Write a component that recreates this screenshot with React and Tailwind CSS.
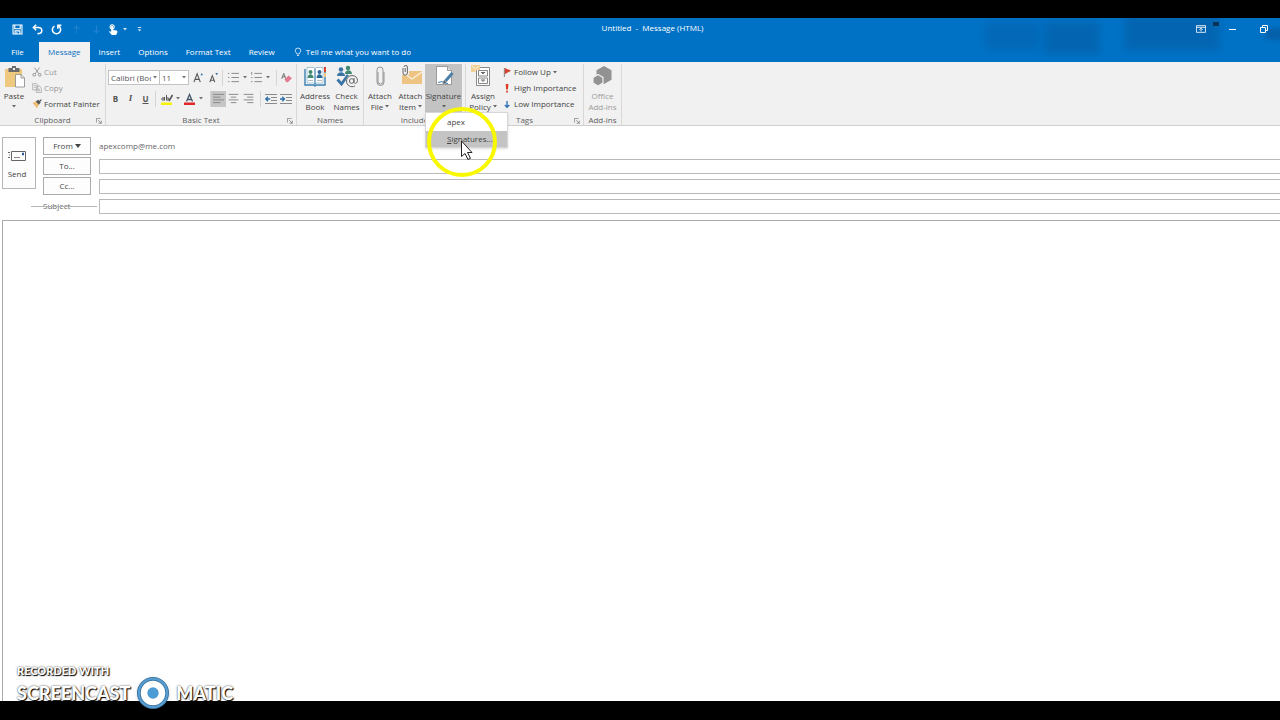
import React, { useState } from 'react';

const tabs = ['File', 'Message', 'Insert', 'Options', 'Format Text', 'Review'];

const Caret = ({ className = '' }) => (
  <svg viewBox="0 0 4 3" className={`inline-block w-1 h-[3px] shrink-0 opacity-80 ${className}`} aria-hidden="true">
    <path d="M0 0h4L2 2.500z" fill="currentColor" />
  </svg>
);

const Icon = ({ box = 16, className = 'w-3 h-3', children }) => (
  <svg viewBox={`0 0 ${box} ${box}`} className={`shrink-0 ${className}`} fill="none" stroke="currentColor" aria-hidden="true">
    {children}
  </svg>
);

/* ---------- large ribbon icons, 24 x 24 ---------- */

const PasteIcon = () => (
  <Icon box={24} className="w-6 h-6">
    <path d="M3 4h17v18H3z" fill="#edc87e" stroke="none" />
    <path d="M6.500 3H10V1h4v2h3.500v4h-11z" fill="#6b6b6b" stroke="none" />
    <path d="M11 3h2v2h-2z" fill="#f1f1f1" stroke="none" />
    <path d="M13.500 9.500h5.500l3.500 3.500v9h-9z" fill="#fff" stroke="#888" strokeWidth=".8" />
    <path d="M19 9.500v3.500h3.500" stroke="#888" strokeWidth=".8" />
  </Icon>
);

const AddressBookIcon = () => (
  <Icon box={24} className="w-6 h-6">
    <path d="M2 4v16h9l1 1 1-1h9V4" fill="#fff" stroke="#3b7fb0" strokeWidth="1.400" />
    <path d="M4 2.500h7l1 1 1-1h7v15.500h-7l-1 1-1-1H4z" fill="#fff" stroke="#8fb2cb" strokeWidth=".8" />
    <path d="M12 3.500v16" stroke="#3b7fb0" strokeWidth="1.200" />
    <path d="M21 2h2v5h-2z" fill="#d9432f" stroke="none" />
    <path d="M21 8h2v4h-2z" fill="#edc87e" stroke="none" />
    <circle cx="7.500" cy="7" r="2" fill="#3f8a70" stroke="none" />
    <path d="M4.500 13c0-5 6-5 6 0z" fill="#3f8a70" stroke="none" />
    <circle cx="16.500" cy="7" r="2" fill="#2b6b99" stroke="none" />
    <path d="M13.500 13c0-5 6-5 6 0z" fill="#2b6b99" stroke="none" />
    <path d="M5 15.500h5M14 15.500h5" stroke="#bbb" />
  </Icon>
);

const CheckNamesIcon = () => (
  <Icon box={24} className="w-6 h-6">
    <circle cx="6" cy="4.500" r="2.300" fill="#3b75a5" stroke="none" />
    <path d="M2 11c0-5 8-5 8 0z" fill="#3b75a5" stroke="none" />
    <circle cx="13" cy="3" r="2.200" fill="#3f8a70" stroke="none" />
    <path d="M10 9c0-5 7-5 7 0z" fill="#3f8a70" stroke="none" />
    <path d="M2.500 14.500l4 4.500 6.500-9" stroke="#3b75a5" strokeWidth="2.800" />
    <circle cx="17" cy="16" r="6" fill="#f1f1f1" stroke="none" />
    <path d="M20 21c-4 2-8.500-.5-8.500-5 0-3 2.500-5.500 5.500-5.500s5.500 2 5.500 5-3.500 4-3.500 1.500v-4" stroke="#666" />
    <circle cx="16.700" cy="16" r="2.300" stroke="#666" />
  </Icon>
);

const ClipIcon = () => (
  <Icon box={24} className="w-6 h-6">
    <path d="M10 7v9.500a2.500 2.500 0 0 0 5 0V5a3 3 0 0 0-6 0v12a3.500 3.500 0 0 0 7 0V7" stroke="#8a8a8a" strokeWidth=".9" />
  </Icon>
);

const AttachItemIcon = () => (
  <Icon box={24} className="w-6 h-6">
    <path d="M3 6h20v13H3z" fill="#edc483" stroke="none" />
    <path d="M3 7l10 7 10-7" stroke="#fbf1dd" strokeWidth="1.300" />
    <path d="M3 0h7v10H3z" fill="#f1f1f1" stroke="none" />
    <path d="M4 3v5a2.200 2.200 0 0 0 4.400 0V2a1.600 1.600 0 0 0-3.200 0M6.200 3v4" stroke="#666" />
  </Icon>
);

const SignatureIcon = () => (
  <Icon box={24} className="w-6 h-6">
    <path d="M4.500 1.500h11l4 4v14h-15z" fill="#fff" stroke="#888" strokeWidth=".8" />
    <path d="M15.500 1.500v4h4" fill="#e4e4e4" stroke="#888" strokeWidth=".8" />
    <path d="M20.500 8L13.500 16" stroke="#4c7fa8" strokeWidth="3" />
    <path d="M12 15l2.500 2.500-4 1.500z" fill="#555" stroke="none" />
    <path d="M6 17.500l4-1 2 1.500 4 .5" stroke="#4c7fa8" />
  </Icon>
);

const PolicyIcon = () => (
  <Icon box={24} className="w-6 h-6">
    <path d="M5.500 2.500h13v18h-13z" fill="#fff" stroke="#888" />
    <path d="M7.500 5.500h9v5.500h-9zM7.500 13h9v5.500h-9z" fill="#fafafa" stroke="#888" />
    <path d="M10 7.500h4M10 15h4" stroke="#666" />
    <path d="M11 8h2v1h-2zM11 15.500h2v1h-2z" fill="#777" stroke="none" />
    <path d="M0 0h9v5H6L4 7H0z" fill="#f2cf96" stroke="none" />
    <path d="M1 1l3.500 3L8 1" stroke="#fff" strokeWidth=".8" />
  </Icon>
);

const AddinsIcon = () => (
  <Icon box={24} className="w-6 h-6">
    <path d="M13 1l7.500 4.300v9.400L13 19l-7.500-4.300V5.300z" fill="#929292" stroke="none" />
    <path d="M7 9.500l5 2.900v5.700L7 21l-5-2.900v-5.700z" fill="#929292" stroke="#f1f1f1" strokeWidth="1.200" />
  </Icon>
);

/* ---------- small building blocks ---------- */

const Sep = ({ className = '' }) => <span className={`w-px h-4 bg-[#d5d5d5] ${className}`} />;

const ToolButton = ({ label, active, children }) => (
  <button
    type="button"
    aria-label={label}
    className={`w-[15px] h-4 flex items-center justify-center shrink-0 ${active ? 'bg-[#c6c6c6]' : ''}`}
  >
    {children}
  </button>
);

const DropButton = ({ label }) => (
  <button type="button" aria-label={label} className="w-2 h-4 flex items-center justify-center shrink-0">
    <Caret />
  </button>
);

const Lines = ({ d }) => (
  <Icon className="w-[11px] h-[11px]">
    <path d={d} stroke="#888" strokeWidth="1.400" />
  </Icon>
);

const BigButton = ({ icon, lines, caret, className = '', ...rest }) => (
  <button type="button" className={`h-12 flex flex-col items-center pt-px leading-[11px] whitespace-nowrap ${className}`} {...rest}>
    {icon}
    <span className="mt-px">{lines[0]}</span>
    <span className="flex items-center gap-[2px] h-[11px]">
      {lines[1]}
      {caret && <Caret />}
    </span>
  </button>
);

const Group = ({ label, launcher, className = '', children }) => (
  <section className={`shrink-0 flex flex-col border-r border-[#d8d8d8] ${className}`} aria-label={label}>
    <div className="h-[50px] flex">{children}</div>
    <div className="relative h-[11px] text-center leading-[11px] text-[#5e5e5e]">
      {label}
      {launcher && (
        <button type="button" aria-label={`${label} settings`} className="absolute right-[3px] top-1">
          <Icon box={8} className="w-[6px] h-[6px]">
            <path d="M.5 6V.5H6M3 3l4 4M7 3.500V7H3.500" stroke="#777" />
          </Icon>
        </button>
      )}
    </div>
  </section>
);

/* ---------- window parts ---------- */

const TitleBar = () => (
  <div className="relative h-6 pb-[2px] flex items-center text-white">
    <div className="absolute top-0 -bottom-4 right-0 w-[300px] overflow-hidden" aria-hidden="true">
      <div className="absolute left-1 top-1 w-14 h-7 bg-[#0560a9] opacity-50 blur-[4px]" />
      <div className="absolute left-16 top-1 w-14 h-8 bg-[#0560a9] opacity-70 blur-[4px]" />
      <div className="absolute left-36 -top-1 w-24 h-9 bg-[#0560a9] opacity-70 blur-[4px]" />
      <div className="absolute right-[-6px] top-[10px] w-5 h-3 bg-[#0560a9] blur-[2px]" />
      <div className="absolute right-[61px] top-1 w-[6px] h-1 bg-[#0b3358]" />
    </div>

    <div className="relative flex items-center pl-[11px]">
      <button type="button" aria-label="Save" className="w-3 flex justify-center">
        <Icon className="w-[11px] h-[11px]"><path d="M1.500 1.500h13v13h-13zM4 2v5h8V2M4.500 14v-4h7v4M7 12v2" strokeWidth="1.600" /></Icon>
      </button>
      <button type="button" aria-label="Undo" className="w-3 ml-2 flex justify-center">
        <Icon className="w-[11px] h-[11px]"><path d="M6 1L2 5l4 4M2 5h7c7 0 7 9 0 9H8" strokeWidth="2.200" /></Icon>
      </button>
      <button type="button" aria-label="Redo" className="w-3 ml-[7px] flex justify-center">
        <Icon className="w-[11px] h-[11px]"><path d="M11 3a6 6 0 1 1-6 0M10 7V2h5" strokeWidth="2.200" /></Icon>
      </button>
      <button type="button" aria-label="Previous item" className="w-3 ml-2 flex justify-center text-[#1f80d0]">
        <Icon className="w-[9px] h-[9px]"><path d="M8 15V2M3 7l5-5 5 5" strokeWidth="2" /></Icon>
      </button>
      <button type="button" aria-label="Next item" className="w-3 ml-2 flex justify-center text-[#1f80d0]">
        <Icon className="w-[9px] h-[9px]"><path d="M8 1v13M3 9l5 5 5-5" strokeWidth="2" /></Icon>
      </button>
      <button type="button" aria-label="Touch mode" className="w-6 ml-[3px] flex items-center justify-center gap-1">
        <Icon className="w-[11px] h-[11px]">
          <circle cx="6" cy="4" r="3" strokeWidth="1.500" />
          <path d="M5 3h2v6l6 1v3l-2 3H6l-4-5 3 1z" fill="currentColor" />
        </Icon>
        <Caret />
      </button>
      <button type="button" aria-label="Customize toolbar" className="w-3 ml-1 flex justify-center">
        <Icon box={6} className="w-[5px] h-[5px]"><path d="M1 .5h4" /><path d="M1 3h4L3 5z" fill="currentColor" stroke="none" /></Icon>
      </button>
    </div>

    <h1 className="absolute left-[47%] right-0 top-1 leading-3 whitespace-pre">Untitled  -  Message (HTML)</h1>

    <div className="relative ml-auto flex items-center gap-5 pr-3">
      <button type="button" aria-label="Ribbon display options" className="mr-[3px]">
        <Icon box={12} className="w-[10px] h-[10px]"><path d="M.5 2h11v8H.5zM.5 4h11M6 9V5.500M4 7l2-2 2 2" /></Icon>
      </button>
      <button type="button" aria-label="Minimize"><Icon box={8} className="w-2 h-2"><path d="M0 4.500h7" /></Icon></button>
      <button type="button" aria-label="Restore" className="ml-[3px]">
        <Icon box={8} className="w-2 h-2"><path d="M.5 2.500h5v5h-5zM2.500 2V.5h5v5H6" /></Icon>
      </button>
    </div>
  </div>
);

const TabBar = ({ active, onSelect }) => (
  <nav className="relative h-5 flex text-white" aria-label="Ribbon tabs">
    {tabs.map((tab) => (
      <button
        key={tab}
        type="button"
        onClick={() => onSelect(tab)}
        className={`whitespace-nowrap ${tab === 'File' ? 'w-[39px] pr-1' : 'px-[9px]'} ${
          active === tab ? 'bg-[#f1f1f1] text-[#0a6fc2]' : ''
        }`}
      >
        {tab}
      </button>
    ))}
    <button type="button" className="flex items-center gap-1 ml-[10px] whitespace-nowrap">
      <Icon className="w-2 h-[10px]"><path d="M5.500 12c0-3-3-3-3-6.500a5.500 5.500 0 0 1 11 0c0 3.500-3 3.500-3 6.500zM6 15h4" strokeWidth="1.500" /></Icon>
      Tell me what you want to do
    </button>
  </nav>
);

const BasicText = () => (
  <div className="pl-[2px] pt-[6px] flex flex-col gap-[6px] text-[#555]">
    <div className="flex items-center h-[15px]">
      <label className="relative w-[52px] h-[15px]">
        <select aria-label="Font" className="appearance-none w-full h-full block bg-white border border-[#c3c3c3] pl-[2px] pr-2 leading-[13px]">
          <option>Calibri (Body)</option>
        </select>
        <Caret className="absolute right-[3px] top-[6px]" />
      </label>
      <label className="relative w-[29px] h-[15px]">
        <select aria-label="Font size" defaultValue="11" className="appearance-none w-full h-full block bg-white border border-l-0 border-[#c3c3c3] pl-[2px] pr-2 leading-[13px]">
          <option>10</option>
          <option>11</option>
          <option>12</option>
        </select>
        <Caret className="absolute right-[3px] top-[6px]" />
      </label>
      <span className="w-[2px]" />
      <ToolButton label="Grow font">
        <Icon box={12} className="w-[11px] h-[11px]"><path d="M1 11L4.500 2 8 11M2.300 8h4.500" stroke="#555" strokeWidth="1.200" /><path d="M8 3.500L9.500 1 11 3.500z" fill="#3b75a5" stroke="none" /></Icon>
      </ToolButton>
      <ToolButton label="Shrink font">
        <Icon box={12} className="w-[11px] h-[11px]"><path d="M2 11l2.700-7 2.700 7M3 9h3.500" stroke="#555" strokeWidth="1.200" /><path d="M8 1h3L9.500 3.500z" fill="#3b75a5" stroke="none" /></Icon>
      </ToolButton>
      <Sep className="ml-px mr-[3px]" />
      <ToolButton label="Bullets"><Lines d="M0 2h2M0 8h2M0 14h2M5 2h11M5 8h11M5 14h11" /></ToolButton>
      <DropButton label="Bullet styles" />
      <ToolButton label="Numbering"><Lines d="M1 0v4M0 8h2M0 14h2M5 2h11M5 8h11M5 14h11" /></ToolButton>
      <DropButton label="Numbering styles" />
      <Sep className="ml-1 mr-[2px]" />
      <ToolButton label="Clear formatting">
        <Icon className="w-[11px] h-[11px]">
          <path d="M1 10l3-8 3 8M2 7h4" stroke="#666" strokeWidth="1.300" />
          <path d="M5 11l6-6 5 4-6 6H8z" fill="#e37c93" stroke="none" />
        </Icon>
      </ToolButton>
    </div>
    <div className="flex items-center h-[15px]">
      <ToolButton label="Bold"><b>B</b></ToolButton>
      <ToolButton label="Italic"><i className="font-['Liberation_Serif',serif] font-bold text-[9px]">I</i></ToolButton>
      <ToolButton label="Underline"><b className="underline">U</b></ToolButton>
      <Sep className="ml-[2px] mr-[3px]" />
      <ToolButton label="Highlight">
        <Icon box={12} className="w-3 h-3">
          <path d="M0 9.500h11V12H0z" fill="#f8f200" stroke="none" />
          <circle cx="2" cy="6" r="1.200" /><path d="M3.500 4v3.500M5.500 2v5.500" /><circle cx="6.800" cy="6" r="1.200" />
          <path d="M11.500 2L8 8" strokeWidth="1.500" />
        </Icon>
      </ToolButton>
      <DropButton label="Highlight colours" />
      <ToolButton label="Font colour">
        <Icon box={12} className="w-3 h-3">
          <path d="M0 9.500h11V12H0z" fill="#e3242b" stroke="none" />
          <path d="M2.500 8.500L5.500 1.500l3 7M3.500 6.500h4" stroke="#44546a" strokeWidth="1.300" />
        </Icon>
      </ToolButton>
      <DropButton label="Font colours" />
      <Sep className="ml-[5px]" />
      <ToolButton label="Align left" active><Lines d="M0 2h16M0 6h11M0 10h16M0 14h11" /></ToolButton>
      <ToolButton label="Align centre"><Lines d="M1 2h14M4 6h8M1 10h14M4 14h8" /></ToolButton>
      <ToolButton label="Align right"><Lines d="M1 2h14M6 6h9M1 10h14M6 14h9" /></ToolButton>
      <Sep className="ml-1 mr-[2px]" />
      {['Decrease indent', 'Increase indent'].map((label, i) => (
        <ToolButton key={label} label={label}>
          <Icon className="w-3 h-3">
            <path d="M0 2h16M8 6h8M8 10h8M0 14h16" stroke="#888" strokeWidth="1.300" />
            <path d={i === 0 ? 'M7 8H1M4 5L1 8l3 3' : 'M0 8h6M3 5l3 3-3 3'} stroke="#2f6fa5" strokeWidth="1.800" />
          </Icon>
        </ToolButton>
      ))}
    </div>
  </div>
);

const SignatureMenu = () => {
  const [open, setOpen] = useState(true);
  return (
    <div className="relative">
      <BigButton
        icon={<SignatureIcon />}
        lines={['Signature', '']}
        caret
        className="w-[37px] bg-[#c3c3c3]"
        aria-expanded={open}
        onClick={() => setOpen(!open)}
      />
      {open && (
        <div role="menu" className="absolute z-10 left-0 top-12 w-[83px] h-9 bg-white border border-[#d6d6d6] shadow-sm flex flex-col text-left">
          <button type="button" role="menuitem" className="h-[18px] pl-[21px] text-left leading-4">apex</button>
          <button type="button" role="menuitem" className="h-4 pl-[21px] text-left leading-4 bg-[#c4c4c4]">
            <span className="underline">S</span>ignatures...
          </button>
          {/* click highlight and pointer */}
          <svg viewBox="0 0 72 72" className="absolute left-0 -top-[7px] w-[72px] h-[72px] pointer-events-none" aria-hidden="true">
            <circle cx="36" cy="36" r="33" fill="none" stroke="#f8f800" strokeWidth="4" />
            <path d="M35.500 35v15.500l3.500-3 3 6 2.500-1.200-3-5.800h4.500z" fill="#fff" stroke="#222" />
          </svg>
        </div>
      )}
    </div>
  );
};

const Ribbon = () => (
  <div className="h-16 pt-[2px] flex bg-[#f1f1f1] border-b border-[#d0d0d0]">
    <Group label="Clipboard" launcher className="w-[106px]">
      <BigButton icon={<PasteIcon />} lines={['Paste', '']} caret className="w-7 shrink-0" />
      <div className="flex flex-col pl-1">
        <button type="button" className="h-4 flex items-center gap-[2px] text-[#969696]">
          <Icon className="w-[10px] h-[10px]">
            <path d="M4 1l7 10M12 1L5 11" strokeWidth="1.500" />
            <circle cx="3.500" cy="12.500" r="2.200" strokeWidth="1.500" /><circle cx="12.500" cy="12.500" r="2.200" strokeWidth="1.500" />
          </Icon>
          Cut
        </button>
        <button type="button" className="h-4 flex items-center gap-[2px] text-[#969696]">
          <Icon className="w-[10px] h-[10px]"><path d="M1 1h6l2 2v8H1zM7 5h5l3 3v7H7zM3 4h3M3 7h3M9 10h4M9 12.500h4" /></Icon>
          Copy
        </button>
        <button type="button" className="h-4 flex items-center gap-[2px] whitespace-nowrap">
          <Icon className="w-[10px] h-[10px]">
            <path d="M1 6l5-2 5 5-3 6z" fill="#edbd70" stroke="none" />
            <path d="M6 4l4-3 4 4-3 4z" fill="#555" stroke="none" /><path d="M12 4l3-3" stroke="#555" strokeWidth="2" />
          </Icon>
          Format Painter
        </button>
      </div>
    </Group>

    <Group label="Basic Text" launcher className="w-[191px]">
      <BasicText />
    </Group>

    <Group label="Names" className="w-[67px]">
      <BigButton icon={<AddressBookIcon />} lines={['Address', 'Book']} className="w-9" />
      <BigButton icon={<CheckNamesIcon />} lines={['Check', 'Names']} className="w-[27px]" />
    </Group>

    <Group label="Include" className="w-[102px]">
      <BigButton icon={<ClipIcon />} lines={['Attach', 'File']} caret className="w-8" />
      <BigButton icon={<AttachItemIcon />} lines={['Attach', 'Item']} caret className="w-[29px] shrink-0" />
      <SignatureMenu />
    </Group>

    <Group label="Tags" launcher className="w-[118px]">
      <BigButton icon={<PolicyIcon />} lines={['Assign', 'Policy']} caret className="w-[34px]" />
      <div className="flex flex-col pl-[3px] whitespace-nowrap">
        <button type="button" className="h-4 flex items-center gap-[2px]">
          <Icon box={10} className="w-[9px] h-[9px]"><path d="M1.500 0v10" stroke="#777" /><path d="M2 0l7 3-7 4z" fill="#d24533" stroke="none" /></Icon>
          Follow Up <Caret />
        </button>
        <button type="button" className="h-4 flex items-center gap-[2px]">
          <Icon box={10} className="w-[9px] h-[9px]"><path d="M3 0h3l-.5 6h-2zM3.500 7.500h2v2h-2z" fill="#dc3b26" stroke="none" /></Icon>
          High Importance
        </button>
        <button type="button" className="h-4 flex items-center gap-[2px]">
          <Icon box={10} className="w-[9px] h-[9px]"><path d="M4.500 1v7M2 5.500L4.500 8 7 5.500" stroke="#2f6fb5" strokeWidth="1.500" /></Icon>
          Low Importance
        </button>
      </div>
    </Group>

    <Group label="Add-ins" className="w-[38px]">
      <BigButton icon={<AddinsIcon />} lines={['Office', 'Add-ins']} className="w-full text-[#9b9b9b]" />
    </Group>
  </div>
);

const fieldButton = 'h-[18px] w-12 border border-[#ababab] bg-[#fdfdfd] flex items-center justify-center gap-[2px]';
const fieldInput = 'h-[15px] w-full border border-r-0 border-[#b9b9b9] bg-white px-1 outline-none';

const MessageHeader = () => (
  <div className="pt-[11px] pl-[2px] pb-[5px] flex">
    <button type="button" className="w-[34px] h-[52px] border border-[#b5b5b5] bg-[#fdfdfd] flex flex-col items-center justify-center gap-[6px] pt-1 pr-1">
      <svg viewBox="0 0 20 12" className="w-5 h-3" fill="none" stroke="#666" aria-hidden="true">
        <path d="M4.500 1.500h14v9h-14z" fill="#fff" />
        <path d="M1 2.500h2M2 5h1M1 7.500h2" />
        <path d="M7 7.500h6" stroke="#888" />
        <path d="M15.500 3h1v2h-1z" fill="#2b5b99" stroke="#2b5b99" />
      </svg>
      Send
    </button>
    <div className="flex-1 ml-[7px] grid grid-cols-[48px_1fr] gap-x-2 gap-y-[2px] auto-rows-[18px] items-center">
      <button type="button" className={fieldButton}>
        From
        <svg viewBox="0 0 6 4" className="w-[6px] h-1" aria-hidden="true"><path d="M0 0h6L3 4z" fill="#444" /></svg>
      </button>
      <span className="text-[#666]">apexcomp@me.com</span>
      <button type="button" className={fieldButton}>To...</button>
      <input type="text" aria-label="To" className={fieldInput} />
      <button type="button" className={fieldButton}>Cc...</button>
      <input type="text" aria-label="Cc" className={fieldInput} />
      <label htmlFor="subject" className="relative text-[#666]">
        {/* rule running through the label */}
        <span className="absolute -left-3 right-[-6px] top-1/2 h-px bg-[#b5b5b5]" />
        Subject
      </label>
      <input id="subject" type="text" className={fieldInput} />
    </div>
  </div>
);

const Watermark = () => (
  <div
    className="absolute z-20 left-[17px] bottom-[10px] text-white font-[Lato,sans-serif] font-black [text-shadow:1px_1px_1px_#000,0_0_2px_#333]"
  >
    <div className="text-[11px] leading-[10px]">RECORDED WITH</div>
    <div className="flex items-center gap-[6px] text-[18px] leading-[34px]">
      SCREENCAST
      <svg viewBox="0 0 36 36" className="w-[34px] h-[34px] drop-shadow" aria-hidden="true">
        <circle cx="18" cy="18" r="15" fill="#fff" stroke="#3a76a5" strokeWidth="4" />
        <circle cx="18" cy="18" r="15" fill="none" stroke="#5a9fd2" strokeWidth="2" />
        <circle cx="18" cy="18" r="6" fill="#4b9bd5" />
      </svg>
      MATIC
    </div>
  </div>
);

const App = () => {
  const [activeTab, setActiveTab] = useState('Message');

  return (
    <div className="relative min-h-screen flex flex-col bg-black pt-[18px] pb-[19px] overflow-hidden font-['Open_Sans','Noto_Sans',sans-serif] text-[8px] text-[#444]">
      <header className="bg-[#0072c6]">
        <TitleBar />
        <TabBar active={activeTab} onSelect={setActiveTab} />
      </header>
      <Ribbon />
      <main className="flex-1 flex flex-col bg-white">
        <MessageHeader />
        <textarea aria-label="Message body" className="flex-1 ml-[2px] border-l border-t border-[#ababab] resize-none outline-none p-2" />
      </main>
      <Watermark />
    </div>
  );
};

export default App;
